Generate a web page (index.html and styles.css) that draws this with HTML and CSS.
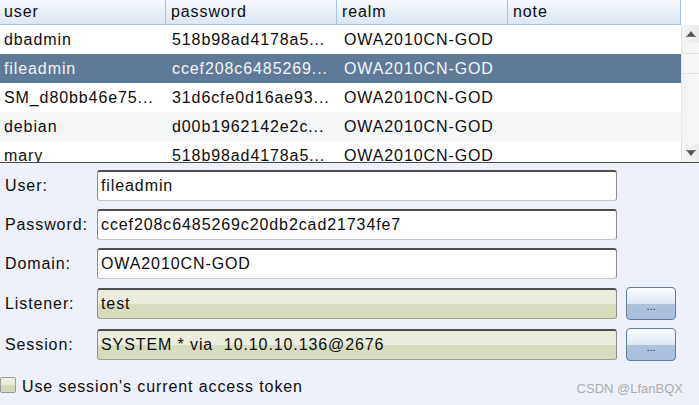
FILE: index.html
```html
<!DOCTYPE html>
<html lang="en">
<head>
    <meta charset="UTF-8">
    <title>Credentials</title>
    <link rel="stylesheet" href="styles.css">
</head>
<body>
    <div class="table-wrap">
        <div class="table">
            <div class="head">
                <div class="th">user</div>
                <div class="th">password</div>
                <div class="th">realm</div>
                <div class="th">note</div>
            </div>
            <div class="body">
                <div class="row">
                    <div class="td">dbadmin</div>
                    <div class="td">518b98ad4178a5...</div>
                    <div class="td">OWA2010CN-GOD</div>
                    <div class="td"></div>
                </div>
                <div class="row alt selected">
                    <div class="td">fileadmin</div>
                    <div class="td">ccef208c6485269...</div>
                    <div class="td">OWA2010CN-GOD</div>
                    <div class="td"></div>
                </div>
                <div class="row">
                    <div class="td">SM_d80bb46e75...</div>
                    <div class="td">31d6cfe0d16ae93...</div>
                    <div class="td">OWA2010CN-GOD</div>
                    <div class="td"></div>
                </div>
                <div class="row alt">
                    <div class="td">debian</div>
                    <div class="td">d00b1962142e2c...</div>
                    <div class="td">OWA2010CN-GOD</div>
                    <div class="td"></div>
                </div>
                <div class="row">
                    <div class="td">mary</div>
                    <div class="td">518b98ad4178a5...</div>
                    <div class="td">OWA2010CN-GOD</div>
                    <div class="td"></div>
                </div>
            </div>
        </div>
        <div class="scrollbar">
            <div class="corner"></div>
            <div class="sb-btn">
                <svg width="10" height="6" viewBox="0 0 10 6"><path d="M5 0 L9 5 L1 5 Z" fill="#555"/><rect x="0" y="5" width="10" height="1" fill="#777"/></svg>
            </div>
            <div class="sb-track">
                <div class="sb-thumb"></div>
            </div>
            <div class="sb-btn">
                <svg width="10" height="6" viewBox="0 0 10 6"><rect x="0" y="0" width="10" height="1" fill="#777"/><path d="M1 1 L9 1 L5 6 Z" fill="#555"/></svg>
            </div>
        </div>
    </div>

    <div class="form">
        <div class="form-row">
            <label class="label">User:</label>
            <div class="field">fileadmin</div>
        </div>
        <div class="form-row">
            <label class="label">Password:</label>
            <div class="field">ccef208c6485269c20db2cad21734fe7</div>
        </div>
        <div class="form-row">
            <label class="label">Domain:</label>
            <div class="field">OWA2010CN-GOD</div>
        </div>
        <div class="form-row tall">
            <label class="label">Listener:</label>
            <div class="field readonly">test</div>
            <div class="pick">...</div>
        </div>
        <div class="form-row tall">
            <label class="label">Session:</label>
            <div class="field readonly">SYSTEM * via&nbsp; 10.10.10.136@2676</div>
            <div class="pick">...</div>
        </div>
        <div class="check-row">
            <span class="checkbox"></span>
            <span class="check-label">Use session's current access token</span>
        </div>
        <div class="watermark">CSDN @LfanBQX</div>
    </div>
</body>
</html>
```
FILE: styles.css
```css
html, body {
    margin: 0;
    padding: 0;
}

body {
    width: 699px;
    height: 405px;
    overflow: hidden;
    background-color: #eef1f9;
    font-family: "Liberation Sans", Arial, sans-serif;
    font-size: 16px;
    letter-spacing: 0.9px;
    color: #0d0d0d;
    position: relative;
}

/* table */
.table-wrap {
    display: flex;
    height: 162px;
    background-color: #fff;
    border-bottom: 1px solid #4a4a4a;
}

.table {
    width: 681px;
    display: flex;
    flex-direction: column;
}

.head {
    display: grid;
    grid-template-columns: 166px 171px 171px 173px;
    height: 24px;
    border-bottom: 1px solid #a9c3de;
    background: linear-gradient(#f6f9fd, #dbe6f3);
}

.th {
    border-right: 1px solid #a9c3de;
    padding-left: 5px;
    line-height: 24px;
    white-space: nowrap;
}

.th:first-child {
    padding-left: 4px;
}

.body {
    flex: 1;
    overflow: hidden;
}

.row {
    display: grid;
    grid-template-columns: 166px 171px 171px 173px;
    height: 29px;
    background-color: #fff;
}

.row.alt {
    background-color: #f5f6f8;
}

.row.selected {
    background-color: #5e7a97;
    color: #f2f5f9;
}

.td {
    padding-left: 6px;
    line-height: 30px;
    white-space: nowrap;
    overflow: hidden;
}

.row .td:first-child {
    padding-left: 4px;
}

.row .td:nth-child(3) {
    padding-left: 7px;
}

.scrollbar {
    width: 18px;
    display: flex;
    flex-direction: column;
    background-color: #fff;
}

.corner {
    height: 25px;
}

.sb-btn {
    height: 18px;
    display: flex;
    align-items: center;
    justify-content: center;
    background: linear-gradient(90deg, #f4f4f4, #ececec);
    border-left: 1px solid #e2e2e2;
}

.sb-track {
    flex: 1;
    background: linear-gradient(90deg, #f3f3f3, #f8f8f8);
    border-left: 1px solid #e6e6e6;
    padding-top: 10px;
}

.sb-thumb {
    height: 19px;
    border-top: 1px solid #e2e2e2;
    border-bottom: 1px solid #e2e2e2;
    background-color: #f7f7f7;
}

/* form */
.form {
    padding-top: 7px;
    display: flex;
    flex-direction: column;
    gap: 8px;
}

.form-row {
    display: flex;
    align-items: center;
    height: 31px;
}

.form-row.tall {
    height: 33px;
}

.label {
    width: 92px;
    padding-left: 5px;
}

.field {
    box-sizing: border-box;
    width: 520px;
    height: 31px;
    padding: 0 3px;
    line-height: 28px;
    background-color: #fff;
    border: 1px solid #8e8e8e;
    border-top: 2px solid #4e4e4e;
    border-bottom-color: #c6c6c6;
    border-radius: 3px;
    white-space: nowrap;
}

.field.readonly {
    background: linear-gradient(#ebeedf 0, #ebeedf 50%, #d7dcbe 50%, #d7dcbe 100%);
    border-bottom-color: #9ea08c;
}

.pick {
    box-sizing: border-box;
    width: 50px;
    height: 33px;
    margin-left: 9px;
    border: 1px solid #5f7d9f;
    border-radius: 4px;
    background: linear-gradient(#fdfeff 0, #dce6f2 50%, #aec3dc 52%, #a8bfda 100%);
    font-size: 11px;
    letter-spacing: 0;
    text-align: center;
    line-height: 36px;
    color: #222;
}

.check-row {
    display: flex;
    align-items: center;
    gap: 6px;
    height: 16px;
    margin-top: 8px;
}

.check-label {
    padding-top: 3px;
}

.checkbox {
    box-sizing: border-box;
    width: 16px;
    height: 16px;
    border: 1px solid #9a9a9a;
    border-radius: 2px;
    background: linear-gradient(#eef0e2 0, #e6e9d6 50%, #d3d8b8 55%, #d6dbbd 100%);
}

.watermark {
    position: absolute;
    right: 16px;
    bottom: 9px;
    font-size: 13px;
    letter-spacing: 0;
    color: #ababab;
}
```
